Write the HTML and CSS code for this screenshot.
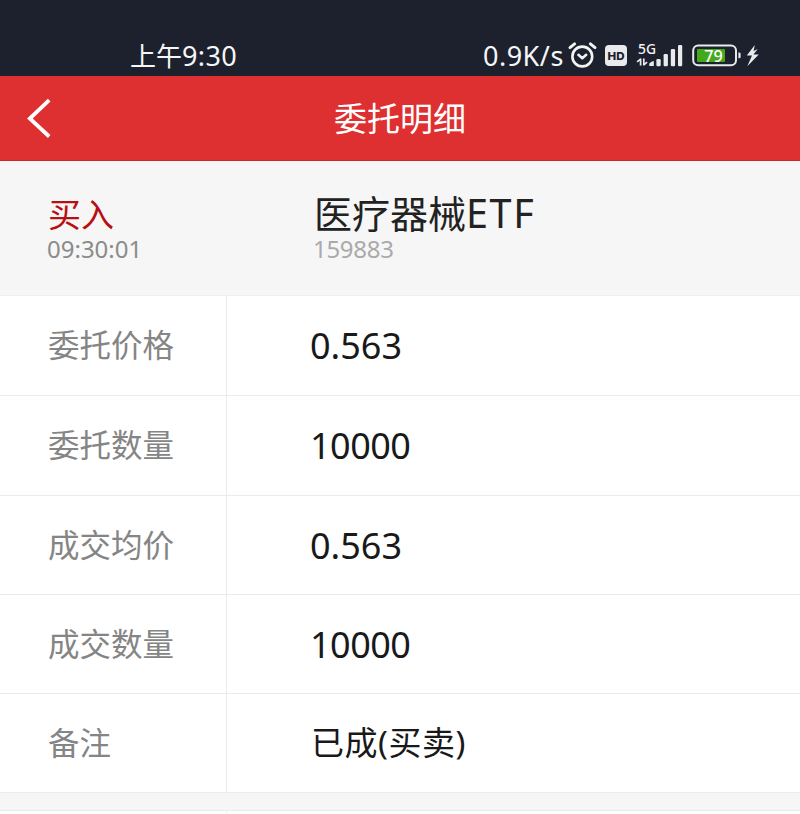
FILE: index.html
```
<!DOCTYPE html>
<html lang="zh-CN">
<head>
<meta charset="utf-8">
<title>委托明细</title>
<link rel="stylesheet" href="styles.css">
</head>
<body>
<div class="status">
  <span class="clock"><span class="ampm">上午</span>9:30</span>
  <span class="speed">0.9K/s</span>
  <svg class="status-icons" width="196" height="30" viewBox="567 40 196 30" fill="none">
    <g stroke="#f2f3f5" stroke-width="2.6" stroke-linecap="round">
      <circle cx="582.3" cy="56.5" r="9.9"/>
      <path d="M578.4 54.8l3.9 3.5 3.9-3.5" stroke-linejoin="round" stroke-width="2.5"/>
      <path d="M570 47.6l4.6-3.7M590.4 43.9l4.6 3.7" stroke-width="3"/>
    </g>
    <rect x="605" y="45" width="22" height="21" rx="4" fill="#e9eaec"/>
    <text x="616" y="59.5" class="hd" text-anchor="middle" textLength="17" lengthAdjust="spacingAndGlyphs">HD</text>
    <text x="638" y="54" class="net" textLength="18" lengthAdjust="spacingAndGlyphs">5G</text>
    <path d="M640.6 58.4v7.2M640.9 58.8l-3.8 3M643.8 58.4v7.2M643.5 65.2l3.6-3" stroke="#e9eaec" stroke-width="1.7"/>
    <g fill="#e9eaec">
      <path d="M649.3 66v-2.6q2-2 4.5-2.4v5z"/>
      <rect x="656.4" y="59" width="4.3" height="7.3" rx="1.2"/>
      <rect x="663.6" y="54" width="4.3" height="12.3" rx="1.2"/>
      <rect x="670.8" y="49" width="4.3" height="17.3" rx="1.2"/>
      <rect x="678" y="45" width="4.2" height="21.3" rx="1.2"/>
    </g>
    <rect x="693.2" y="45.5" width="42.8" height="19.8" rx="5" stroke="#e9eaec" stroke-width="2"/>
    <rect x="697" y="49" width="28" height="13" rx="1" fill="#43a91b"/>
    <text x="713.5" y="61.7" class="pct" text-anchor="middle" textLength="18.5" lengthAdjust="spacingAndGlyphs">79</text>
    <path d="M738.4 52.5h.8q1.4 0 1.4 1.4v3q0 1.4-1.4 1.4h-.8z" fill="#e9eaec"/>
    <path d="M754.8 45l-8 10.4h5.2l-4.7 10.8 11.5-11.8h-5.3l4.2-5.3-4.1 2z" fill="#e9eaec"/>
  </svg>
</div>
<header class="nav">
  <svg class="back" width="28" height="42" viewBox="0 0 28 42" fill="none"><path d="M24.2 3.2L4.8 21.5l19.4 18" stroke="#fff" stroke-width="3.8"/></svg>
  <h1>委托明细</h1>
</header>
<section class="summary">
  <div class="side">
    <div class="buy">买入</div>
    <div class="time">09:30:01</div>
  </div>
  <div class="stock">
    <div class="name">医疗器械<span class="etf">ETF</span></div>
    <div class="code">159883</div>
  </div>
</section>
<dl class="rows">
  <div class="row"><dt>委托价格</dt><dd>0.563</dd></div>
  <div class="row"><dt>委托数量</dt><dd class="qty">10000</dd></div>
  <div class="row"><dt>成交均价</dt><dd>0.563</dd></div>
  <div class="row"><dt>成交数量</dt><dd class="qty">10000</dd></div>
  <div class="row"><dt>备注</dt><dd class="state">已成(买卖)</dd></div>
</dl>
<div class="gap"></div>
<div class="next"></div>
</body>
</html>
```
FILE: styles.css
```
* { box-sizing: border-box; margin: 0; padding: 0; }
body {
  width: 800px;
  height: 814px;
  overflow: hidden;
  background: #fff;
  font-family: "Noto Sans", "Noto Sans CJK SC", sans-serif;
}
.status {
  height: 76px;
  padding: 36px 0 0 130px;
  display: flex;
  background: #1d212d;
  color: #f5f6f8;
  font-size: 27px;
  line-height: 40px;
  white-space: nowrap;
}
.clock { width: 353px; letter-spacing: 0.4px; }
.ampm { font-size: 26px; letter-spacing: 0; }
.speed { width: 84px; letter-spacing: 0.5px; }
.status-icons { margin-top: 4px; }
.hd { font: 800 11px Inter, sans-serif; fill: #1d212d; }
.net { font: 500 14px "Noto Sans", sans-serif; fill: #f2f3f5; }
.pct { font: 500 17px "Noto Sans", sans-serif; fill: #fff; }
.nav {
  height: 85px;
  display: grid;
  grid-template-columns: 80px 640px 80px;
  align-items: center;
  background: #de3031;
  border-bottom: 1px solid #c9292a;
  color: #fff;
}
.back { margin-left: 25px; }
.nav h1 { padding-top: 2px; font-size: 33px; font-weight: 400; line-height: 46px; text-align: center; }
.summary {
  height: 135px;
  display: flex;
  background: #f6f6f6;
  border-bottom: 1px solid #efefef;
}
.side { width: 314px; padding: 30px 0 0 47px; }
.stock { padding-top: 28px; }
.buy { padding: 1px 0 0 1px; color: #b80f10; font-size: 33px; line-height: 45px; }
.name { color: #222; font-size: 38px; line-height: 48px; }
.etf { font-size: 39.5px; letter-spacing: 1.6px; line-height: 1; }
.time, .code { font-size: 24px; line-height: 24px; }
.time { color: #8b8b8b; }
.code { margin-left: -1px; color: #aaa; letter-spacing: -0.3px; }
.rows { height: 497px; display: grid; grid-template-rows: 100px 100px 99px 99px 99px; }
.row {
  display: grid;
  grid-template-columns: 227px 1fr;
  align-items: stretch;
  border-bottom: 1px solid #ebebeb;
  line-height: 98px;
}
.row dt { padding-left: 48px; border-right: 1px solid #ebebeb; color: #858585; font-size: 31.5px; }
.row dd { padding: 1px 0 0 83px; height: 98px; color: #191919; font-size: 36px; }
.row dd.qty { letter-spacing: -0.5px; }
.row dd.state { font-size: 33px; padding: 0 0 0 84px; letter-spacing: 0.5px; }
.gap { height: 18px; background: #f6f6f6; border-bottom: 1px solid #ebebeb; }
.next { height: 3px; width: 227px; border-right: 1px solid #f2f2f2; }
```
